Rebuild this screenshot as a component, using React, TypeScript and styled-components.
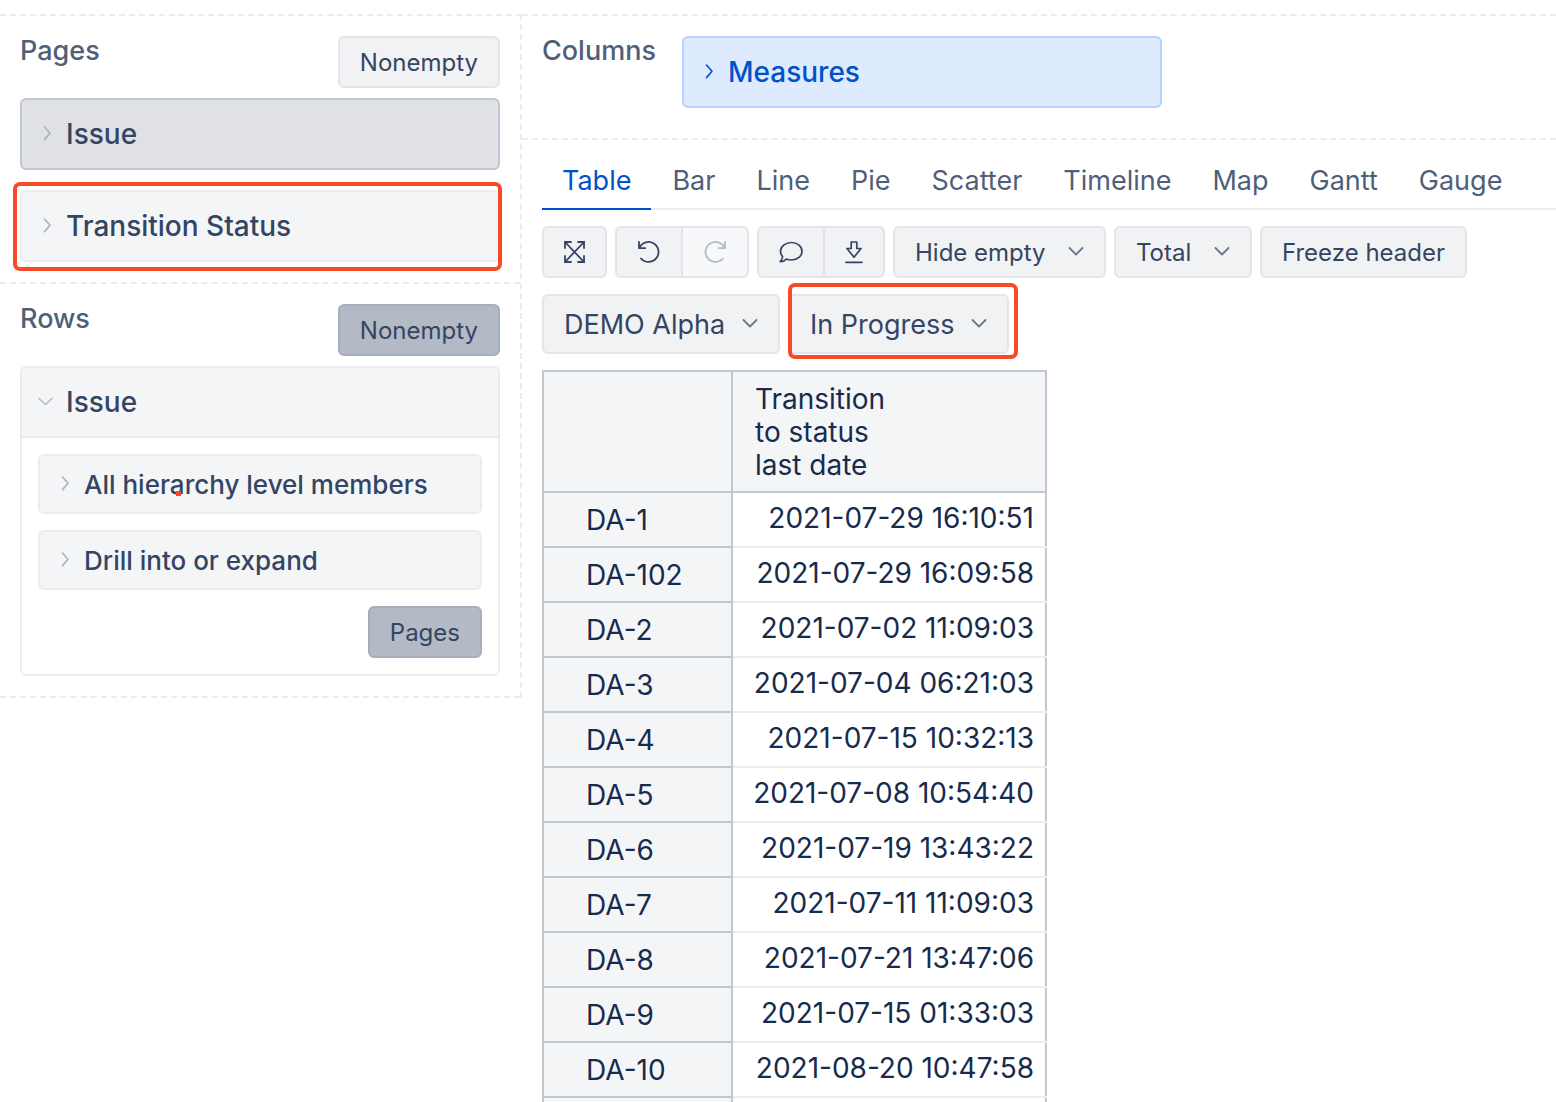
import React from "react";
import styled, { createGlobalStyle, css } from "styled-components";

const color = {
  text: "#172b4d",
  control: "#344563",
  muted: "#505f79",
  line: "#ebecf0",
  strong: "#c1c7d0",
  panel: "#f4f5f7",
  blue: "#0052cc",
  mark: "#f74a27",
};

const GlobalStyle = createGlobalStyle`
  *, *::before, *::after { box-sizing: border-box; }
  body {
    margin: 0;
    background: #fff;
    color: ${color.text};
    font-family: Inter, "Liberation Sans", sans-serif;
    font-size: 27px;
  }
  button, select { font: inherit; color: inherit; margin: 0; cursor: pointer; }
`;

const Page = styled.div`
  display: flex;
  align-items: flex-start;
  height: 100vh;
  padding-top: 14px;
  overflow: hidden;
`;

const Sidebar = styled.aside`
  flex: 0 0 522px;
  border-top: 2px dashed ${color.line};
  border-right: 2px dashed ${color.line};
`;

const Section = styled.section`
  display: flex;
  flex-direction: column;
  gap: 10px;
  padding: 20px;
  border-bottom: 2px dashed ${color.line};
`;

const SectionHead = styled.header`
  display: flex;
  justify-content: space-between;
  align-items: flex-start;
`;

const Title = styled.h2`
  margin: 0;
  font-size: 27px;
  line-height: 30px;
  font-weight: 500;
  color: ${color.muted};
`;

const Stack = styled.div<{ $gap: number }>`
  display: flex;
  flex-direction: column;
  gap: ${(p) => p.$gap}px;
`;

const controlFace = css`
  border: 2px solid #e3e5ea;
  border-radius: 6px;
  background: #f1f2f4;
  color: ${color.control};
`;

const Button = styled.button<{ $pressed?: boolean }>`
  ${controlFace}
  height: 52px;
  padding: 2px 20px 0;
  font-size: 24px;
  line-height: 28px;
  ${(p) =>
    p.$pressed &&
    css`
      background: #b3b9c5;
      border-color: #a6aebb;
    `}
`;

type Tone = "plain" | "active" | "blue";

const tones = {
  plain: css`
    background: ${color.panel};
    border-color: ${color.line};
  `,
  active: css`
    background: #dfe1e6;
    border-color: ${color.strong};
  `,
  blue: css`
    background: #deebff;
    border-color: #b3d4ff;
    color: ${color.blue};
  `,
};

const Card = styled.button<{ $tone?: Tone; $small?: boolean }>`
  display: flex;
  align-items: center;
  gap: 8px;
  width: 100%;
  height: ${(p) => (p.$small ? 60 : 72)}px;
  padding: 0 16px;
  border: 2px solid;
  border-radius: 6px;
  color: ${color.control};
  font-size: ${(p) => (p.$small ? 26 : 28)}px;
  font-weight: 500;
  text-align: left;
  ${(p) => tones[p.$tone ?? "plain"]}
`;

const Group = styled.div`
  border: 2px solid ${color.line};
  border-radius: 6px;
  overflow: hidden;
`;

const GroupHead = styled(Card)`
  height: 70px;
  border-width: 0 0 2px;
  border-radius: 0;
`;

const GroupBody = styled(Stack)`
  padding: 16px;
  & > ${Button} { align-self: flex-end; }
`;

const Marked = styled.div`
  position: relative;
`;

const Mark = styled.span<{ $inset: string }>`
  position: absolute;
  inset: ${(p) => p.$inset};
  border: 4px solid ${color.mark};
  border-radius: 7px;
  pointer-events: none;
`;

const Speck = styled.span`
  position: absolute;
  left: 138px;
  top: 37px;
  width: 5px;
  height: 5px;
  background: ${color.mark};
  pointer-events: none;
`;

const Main = styled.main`
  flex: 1;
  min-width: 0;
`;

const Columns = styled.section`
  display: grid;
  grid-template-columns: 140px minmax(0, 480px);
  padding: 20px 20px 30px;
  border: dashed ${color.line};
  border-width: 2px 0;
`;

const Tabs = styled.div`
  display: flex;
  gap: 1px;
  margin-left: 20px;
  box-shadow: inset 0 -2px ${color.line};
`;

const Tab = styled.button<{ $on: boolean }>`
  height: 70px;
  padding: 12px 20px 0;
  border: 0;
  border-bottom: 2px solid ${(p) => (p.$on ? color.blue : "transparent")};
  background: none;
  color: ${(p) => (p.$on ? color.blue : color.muted)};
`;

const Report = styled(Stack)`
  padding: 16px 0 0 20px;
`;

const Bar = styled.div`
  display: flex;
  gap: 8px;
`;

const Joined = styled.div`
  display: flex;
  & > button:first-child {
    border-right: 0;
    border-radius: 6px 0 0 6px;
  }
  & > button:last-child { border-radius: 0 6px 6px 0; }
`;

const IconButton = styled(Button)`
  display: flex;
  align-items: center;
  padding: 0 20px;
  &:disabled {
    background: #f7f8fa;
    color: #b3bac5;
    cursor: default;
  }
`;

const Drop = styled.label`
  position: relative;
  display: flex;
  color: #6b778c;
  & > svg {
    position: absolute;
    right: 22px;
    top: calc(50% - 9px);
    pointer-events: none;
  }
`;

const Select = styled.select<{ $large?: boolean }>`
  ${controlFace}
  appearance: none;
  height: ${(p) => (p.$large ? 60 : 52)}px;
  padding: 0 ${(p) => (p.$large ? 52 : 58)}px 0 20px;
  font-size: ${(p) => (p.$large ? 27 : 24)}px;
`;

const Table = styled.table`
  align-self: flex-start;
  border-collapse: collapse;
  line-height: 33px;
  font-size: 28px;
`;

const HeadCell = styled.th`
  height: 121px;
  padding: 11px 22px 9px;
  border: 2px solid ${color.strong};
  background: ${color.panel};
  font-weight: 400;
  text-align: left;
  &:first-child { width: 189px; }
  &:last-child { width: 314px; }
`;

const RowHead = styled.th`
  height: 55px;
  padding: 2px 42px 0;
  border: 2px solid ${color.strong};
  background: ${color.panel};
  font-weight: 400;
  text-align: left;
`;

const Cell = styled.td`
  padding: 0 11px 2px;
  border-right: 2px solid ${color.strong};
  border-bottom: 2px solid ${color.line};
  text-align: right;
  white-space: nowrap;
`;

const Icon = ({ w = 24, h = 24, children }: { w?: number; h?: number; children: React.ReactNode }) => (
  <svg
    width={w}
    height={h}
    viewBox={`0 0 ${w} ${h}`}
    fill="none"
    stroke="currentColor"
    strokeWidth="1.8"
    strokeLinecap="round"
    strokeLinejoin="round"
    aria-hidden="true"
  >
    {children}
  </svg>
);

const Right = ({ stroke = "#a9b1be" }) => (
  <Icon w={20} h={18}>
    <path d="M6.5 2 12 8.3 6.5 14.6" stroke={stroke} strokeWidth="1.6" />
  </Icon>
);

const Down = ({ stroke = "#b3bac5" }) => (
  <Icon w={20} h={18}>
    <path d="M1 5.5 7.5 11.5 14 5.5" stroke={stroke} strokeWidth="1.6" />
  </Icon>
);

const Caret = () => (
  <Icon w={16} h={16}>
    <path d="M1.5 5 8 11.5 14.5 5" />
  </Icon>
);

const Expand = () => (
  <Icon w={21} h={24}>
    <path d="M1 2 20 22M20 2 1 22" />
    <path d="M1 8V2H7M14 2H20V8M20 16V22H14M7 22H1V16" />
  </Icon>
);

const Undo = () => (
  <Icon>
    <path d="M2 2V8.2H8.2M2.4 7.8A10 10 0 1 1 4 18.5" />
  </Icon>
);

const Redo = () => (
  <Icon>
    <path d="M22 2V8.2H15.8M21.6 7.8A10 10 0 1 0 20 18.5" />
  </Icon>
);

const Comment = () => (
  <Icon>
    <path
      d="M12.5 2.5C18.5 2.5 23 6.4 23 11.2S18.5 20 12.5 20C10.7 20 9 19.7 7.5 19C6 20.8 3.5 21.6 1.2 21.6C2.7 20 3.6 18.3 3.6 16.5C2.3 15 1.5 13.2 1.5 11.2C1.5 6.4 6.5 2.5 12.5 2.5Z"
      strokeWidth="1.7"
    />
  </Icon>
);

const Download = () => (
  <Icon w={18} h={24}>
    <path d="M6.2 2H11.8V8.5H16L9 17.2 2 8.5H6.2ZM1 22.3H17" strokeWidth="1.7" />
  </Icon>
);

const Dropdown = ({ label, value, large }: { label: string; value: string; large?: boolean }) => (
  <Drop>
    <Select aria-label={label} $large={large} defaultValue={value}>
      <option>{value}</option>
    </Select>
    <Caret />
  </Drop>
);

const tabs = ["Table", "Bar", "Line", "Pie", "Scatter", "Timeline", "Map", "Gantt", "Gauge"];

const rows = [
  ["DA-1", "2021-07-29 16:10:51"],
  ["DA-102", "2021-07-29 16:09:58"],
  ["DA-2", "2021-07-02 11:09:03"],
  ["DA-3", "2021-07-04 06:21:03"],
  ["DA-4", "2021-07-15 10:32:13"],
  ["DA-5", "2021-07-08 10:54:40"],
  ["DA-6", "2021-07-19 13:43:22"],
  ["DA-7", "2021-07-11 11:09:03"],
  ["DA-8", "2021-07-21 13:47:06"],
  ["DA-9", "2021-07-15 01:33:03"],
  ["DA-10", "2021-08-20 10:47:58"],
  ["", ""],
];

export default function App() {
  const [tab, setTab] = React.useState("Table");
  return (
    <>
      <GlobalStyle />
      <Page>
        <Sidebar>
          <Section>
            <SectionHead>
              <Title>Pages</Title>
              <Button type="button">Nonempty</Button>
            </SectionHead>
            <Stack $gap={20}>
              <Card type="button" $tone="active">
                <Right />
                Issue
              </Card>
              <Marked>
                <Card type="button">
                  <Right />
                  Transition Status
                </Card>
                <Mark $inset="-8px -2px -9px -7px" />
              </Marked>
            </Stack>
          </Section>
          <Section>
            <SectionHead>
              <Title>Rows</Title>
              <Button type="button" $pressed aria-pressed="true">
                Nonempty
              </Button>
            </SectionHead>
            <Group>
              <GroupHead type="button" aria-expanded="true">
                <Down />
                Issue
              </GroupHead>
              <GroupBody $gap={16}>
                <Marked>
                  <Card type="button" $small>
                    <Right />
                    All hierarchy level members
                  </Card>
                  <Speck />
                </Marked>
                <Card type="button" $small>
                  <Right />
                  Drill into or expand
                </Card>
                <Button type="button" $pressed>
                  Pages
                </Button>
              </GroupBody>
            </Group>
          </Section>
        </Sidebar>
        <Main>
          <Columns>
            <Title>Columns</Title>
            <Card type="button" $tone="blue">
              <Right stroke={color.blue} />
              Measures
            </Card>
          </Columns>
          <Tabs role="tablist">
            {tabs.map((name) => (
              <Tab
                key={name}
                type="button"
                role="tab"
                aria-selected={tab === name}
                $on={tab === name}
                onClick={() => setTab(name)}
              >
                {name}
              </Tab>
            ))}
          </Tabs>
          <Report $gap={16}>
            <Bar>
              <IconButton type="button" aria-label="Full screen">
                <Expand />
              </IconButton>
              <Joined>
                <IconButton type="button" aria-label="Undo">
                  <Undo />
                </IconButton>
                <IconButton type="button" aria-label="Redo" disabled>
                  <Redo />
                </IconButton>
              </Joined>
              <Joined>
                <IconButton type="button" aria-label="Comment">
                  <Comment />
                </IconButton>
                <IconButton type="button" aria-label="Download">
                  <Download />
                </IconButton>
              </Joined>
              <Dropdown label="Empty rows" value="Hide empty" />
              <Dropdown label="Totals" value="Total" />
              <Button type="button">Freeze header</Button>
            </Bar>
            <Bar>
              <Dropdown label="Issue" value="DEMO Alpha" large />
              <Marked>
                <Dropdown label="Transition Status" value="In Progress" large />
                <Mark $inset="-11px -9px -5px 0" />
              </Marked>
            </Bar>
            <Table>
              <thead>
                <tr>
                  <HeadCell />
                  <HeadCell scope="col">
                    Transition
                    <br />
                    to status
                    <br />
                    last date
                  </HeadCell>
                </tr>
              </thead>
              <tbody>
                {rows.map(([key, date]) => (
                  <tr key={key}>
                    <RowHead scope="row">{key}</RowHead>
                    <Cell>{date}</Cell>
                  </tr>
                ))}
              </tbody>
            </Table>
          </Report>
        </Main>
      </Page>
    </>
  );
}
